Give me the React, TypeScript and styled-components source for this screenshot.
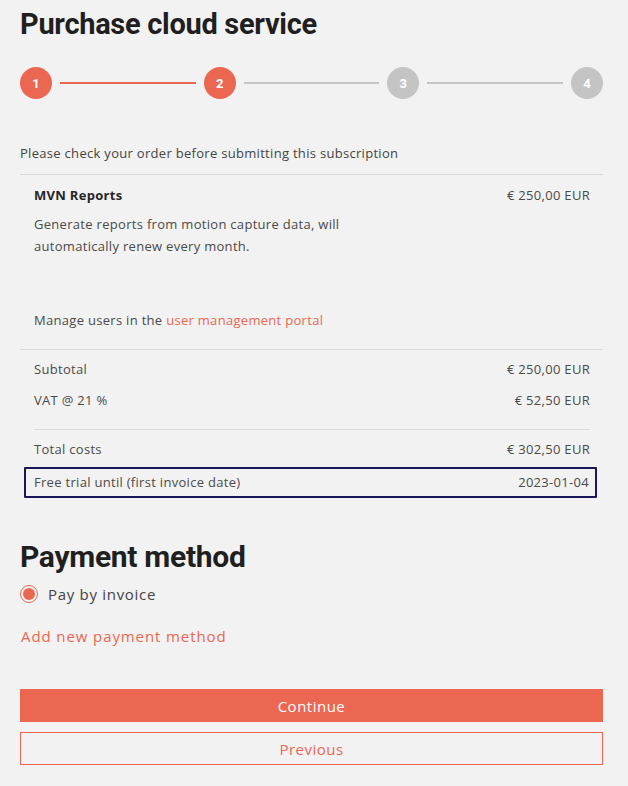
import React from 'react';
import styled, { createGlobalStyle } from 'styled-components';

const accent = '#eb6751';
const grey = '#c4c4c4';

const GlobalStyle = createGlobalStyle`
  body {
    margin: 0;
    background: #f2f2f2;
    font-family: 'Open Sans', 'Liberation Sans', sans-serif;
    letter-spacing: 0.3px;
    color: #444;
  }
`;

const Page = styled.main`
  padding: 6px 25px 20px 20px;
  display: flex;
  flex-direction: column;
`;

const Heading = styled.h1`
  margin: 0;
  font-family: 'Roboto', 'Liberation Sans', sans-serif;
  font-weight: 700;
  font-size: 29px;
  line-height: 36px;
  letter-spacing: -0.3px;
  color: #1f1f1f;
`;

const Stepper = styled.div`
  display: flex;
  align-items: center;
  margin: 25px 0 0;
`;

const Step = styled.div<{ $done: boolean }>`
  flex: none;
  width: 32px;
  height: 32px;
  border-radius: 50%;
  background: ${({ $done }) => ($done ? accent : grey)};
  color: #fff;
  font-family: 'Roboto', sans-serif;
  font-weight: 700;
  font-size: 13px;
  letter-spacing: 0;
  display: flex;
  align-items: center;
  justify-content: center;
`;

const Connector = styled.div<{ $done: boolean }>`
  flex: 1;
  height: 2px;
  margin: 0 8px;
  background: ${({ $done }) => ($done ? accent : grey)};
`;

const Intro = styled.p`
  margin: 46px 0 0;
  font-size: 13px;
  line-height: 16px;
  color: #444;
`;

const Section = styled.section`
  border-top: 1px solid #d9d9d9;
  margin-top: 13px;
  padding: 10px 13px 0 14px;
`;

const Row = styled.div<{ $gap?: number }>`
  display: flex;
  justify-content: space-between;
  align-items: center;
  font-size: 13px;
  line-height: 20px;
  color: #4a4a4a;
  margin-top: ${({ $gap }) => $gap ?? 0}px;
`;

const Product = styled.span`
  font-weight: 700;
  color: #262626;
`;

const Description = styled.p`
  margin: 8px 0 0;
  font-size: 13px;
  line-height: 22px;
  width: 320px;
  color: #4a4a4a;
`;

const Manage = styled.p`
  margin: 53px 0 0;
  font-size: 13px;
  line-height: 20px;
  color: #4a4a4a;
`;

const Link = styled.a`
  color: ${accent};
  text-decoration: none;
`;

const Totals = styled.section`
  border-top: 1px solid #d9d9d9;
  margin-top: 19px;
  padding: 9px 13px 0 14px;
`;

const Divider = styled.hr`
  border: none;
  border-top: 1px solid #d9d9d9;
  margin: 19px 0 0;
`;

const Highlight = styled.div`
  margin: 8px -7px 0 -10px;
  padding: 3px 6px 4px 8px;
  border: 2px solid #1b1657;
  border-radius: 1px;
  display: flex;
  justify-content: space-between;
  font-size: 13px;
  line-height: 20px;
  color: #4a4a4a;
`;

const SubHeading = styled(Heading).attrs({ as: 'h2' })`
  margin-top: 41px;
  font-size: 30px;
`;

const Radio = styled.label`
  display: flex;
  align-items: center;
  gap: 10px;
  margin-top: 7px;
  font-size: 15px;
  line-height: 24px;
  letter-spacing: 0.7px;
  color: #444;
`;

const RadioMark = styled.span`
  width: 18px;
  height: 18px;
  border-radius: 50%;
  border: 1px solid ${accent};
  box-sizing: border-box;
  display: flex;
  align-items: center;
  justify-content: center;

  &::after {
    content: '';
    width: 12px;
    height: 12px;
    border-radius: 50%;
    background: ${accent};
  }
`;

const AddLink = styled(Link)`
  margin-top: 20px;
  font-size: 15px;
  line-height: 20px;
  letter-spacing: 0.9px;
  margin-left: 1px;
`;

const Button = styled.button<{ $primary?: boolean }>`
  width: 100%;
  height: 33px;
  font-family: 'Open Sans', sans-serif;
  font-size: 15px;
  letter-spacing: 0.5px;
  border: 1px solid ${accent};
  background: ${({ $primary }) => ($primary ? accent : 'transparent')};
  color: ${({ $primary }) => ($primary ? '#fff' : accent)};
  margin-top: ${({ $primary }) => ($primary ? 43 : 10)}px;
  cursor: pointer;
`;

const steps = [1, 2, 3, 4];
const current = 2;

export default function App() {
  return (
    <>
      <GlobalStyle />
      <Page>
        <Heading>Purchase cloud service</Heading>
        <Stepper>
          {steps.map((n, i) => (
            <React.Fragment key={n}>
              <Step $done={n <= current}>{n}</Step>
              {i < steps.length - 1 && <Connector $done={n < current} />}
            </React.Fragment>
          ))}
        </Stepper>

        <Intro>Please check your order before submitting this subscription</Intro>

        <Section>
          <Row>
            <Product>MVN Reports</Product>
            <span>€ 250,00 EUR</span>
          </Row>
          <Description>
            Generate reports from motion capture data, will automatically renew every month.
          </Description>
          <Manage>
            Manage users in the <Link href="#">user management portal</Link>
          </Manage>
        </Section>

        <Totals>
          <Row>
            <span>Subtotal</span>
            <span>€ 250,00 EUR</span>
          </Row>
          <Row $gap={11}>
            <span>VAT @ 21 %</span>
            <span>€ 52,50 EUR</span>
          </Row>
          <Divider />
          <Row $gap={9}>
            <span>Total costs</span>
            <span>€ 302,50 EUR</span>
          </Row>
          <Highlight>
            <span>Free trial until (first invoice date)</span>
            <span>2023-01-04</span>
          </Highlight>
        </Totals>

        <SubHeading>Payment method</SubHeading>
        <Radio>
          <RadioMark />
          Pay by invoice
        </Radio>
        <AddLink href="#">Add new payment method</AddLink>

        <Button $primary>Continue</Button>
        <Button>Previous</Button>
      </Page>
    </>
  );
}
